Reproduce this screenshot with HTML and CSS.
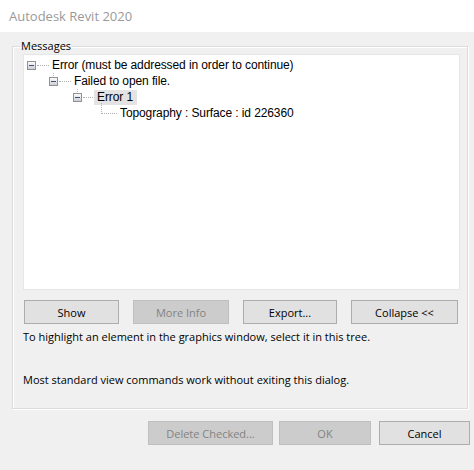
FILE: index.html
```html
<!DOCTYPE html>
<html>
<head>
<meta charset="utf-8">
<link rel="stylesheet" href="styles.css">
</head>
<body>
<div class="window">
  <div class="titlebar">Autodesk Revit 2020</div>
  <div class="dialog">
    <fieldset class="group">
      <legend class="legend">Messages</legend>
      <div class="tree">
        <div class="row lvl0">
          <span class="toggle"><svg width="9" height="9" viewBox="0 0 9 9"><defs><linearGradient id="g1" x1="0" y1="0" x2="0" y2="1"><stop offset="0" stop-color="#ffffff"/><stop offset="1" stop-color="#c9cbd0"/></linearGradient></defs><rect x="0.5" y="0.5" width="8" height="8" fill="url(#g1)" stroke="#8e9297"/><rect x="2" y="4" width="5" height="1" fill="#3f4e72"/></svg></span>
          <span class="hline"></span>
          <span class="label">Error (must be addressed in order to continue)</span>
        </div>
        <div class="row lvl1">
          <span class="vtick"></span>
          <span class="toggle"><svg width="9" height="9" viewBox="0 0 9 9"><rect x="0.5" y="0.5" width="8" height="8" fill="url(#g1)" stroke="#8e9297"/><rect x="2" y="4" width="5" height="1" fill="#3f4e72"/></svg></span>
          <span class="hline"></span>
          <span class="label">Failed to open file.</span>
        </div>
        <div class="row lvl2">
          <span class="vtick"></span>
          <span class="toggle"><svg width="9" height="9" viewBox="0 0 9 9"><rect x="0.5" y="0.5" width="8" height="8" fill="url(#g1)" stroke="#8e9297"/><rect x="2" y="4" width="5" height="1" fill="#3f4e72"/></svg></span>
          <span class="hline short"></span>
          <span class="label selected">Error 1</span>
        </div>
        <div class="row lvl3">
          <span class="elbow"></span>
          <span class="label">Topography : Surface : id 226360</span>
        </div>
      </div>
      <div class="actions">
        <button class="btn w-show">Show</button>
        <button class="btn disabled w-more">More Info</button>
        <button class="btn w-export">Export...</button>
        <button class="btn w-collapse">Collapse &lt;&lt;</button>
      </div>
      <p class="note first">To highlight an element in the graphics window, select it in this tree.</p>
      <p class="note second">Most standard view commands work without exiting this dialog.</p>
    </fieldset>
    <div class="footer">
      <button class="btn disabled w-delete">Delete Checked...</button>
      <button class="btn disabled w-ok">OK</button>
      <button class="btn w-cancel">Cancel</button>
    </div>
  </div>
</div>
</body>
</html>
```
FILE: styles.css
```css
html, body {
  margin: 0;
  padding: 0;
}
body {
  width: 474px;
  height: 470px;
  overflow: hidden;
  background: #f0f0f0;
  font-family: "Open Sans", "Noto Sans", sans-serif;
  font-size: 11px;
  color: #000;
}
.window {
  display: flex;
  flex-direction: column;
  height: 470px;
}
.titlebar {
  height: 32px;
  background: #ffffff;
  box-sizing: border-box;
  padding-left: 9px;
  font-size: 13px;
  line-height: 32px;
  color: #9a9a9a;
}
.dialog {
  flex: 1;
  background: #f0f0f0;
  display: flex;
  flex-direction: column;
}
.group {
  margin: 7px 6px 0 12px;
  padding: 0 7px 20px 10px;
  border: 1px solid #dcdcdc;
  box-shadow: inset 1px 1px 0 #ffffff, 1px 1px 0 #ffffff;
  min-width: 0;
}
.legend {
  margin-left: -3px;
  padding: 0 1px;
  font-size: 11px;
  line-height: 14px;
}
.tree {
  margin-top: 1px;
  height: 236px;
  box-sizing: border-box;
  background: #ffffff;
  border: 1px solid #e6e6e6;
  padding-top: 2px;
  font-family: "Liberation Sans", Arial, sans-serif;
  font-size: 12px;
  letter-spacing: -0.1px;
}
.row {
  height: 16px;
  display: flex;
  align-items: center;
  position: relative;
}
.lvl0 { padding-left: 3px; }
.lvl1 { padding-left: 25px; }
.lvl2 { padding-left: 49px; }
.lvl3 { padding-left: 77px; }
.toggle {
  width: 9px;
  height: 9px;
  display: block;
  flex: none;
}
.toggle svg { display: block; }
.hline {
  width: 12px;
  height: 0;
  border-top: 1px dotted #b0b0b0;
  margin: 0 3px 0 1px;
  flex: none;
}
.hline.short {
  width: 10px;
  margin-right: 1px;
}
.vtick {
  position: absolute;
  top: 0;
  width: 0;
  height: 3px;
  border-left: 1px dotted #b0b0b0;
}
.lvl1 .vtick { left: 29px; }
.lvl2 .vtick { left: 53px; }
.elbow {
  width: 16px;
  height: 11px;
  margin-top: -9px;
  margin-right: 3px;
  border-left: 1px dotted #b0b0b0;
  border-bottom: 1px dotted #b0b0b0;
  flex: none;
  box-sizing: border-box;
}
.label {
  white-space: nowrap;
  line-height: 15px;
}
.label.selected {
  background: #e3e3e3;
  padding: 0 4px 0 3px;
}
.actions {
  display: flex;
  gap: 14px;
  margin-top: 10px;
  padding-left: 1px;
}
.btn {
  height: 24px;
  box-sizing: border-box;
  background: #e1e1e1;
  border: 1px solid #adadad;
  font-family: "Open Sans", "Noto Sans", sans-serif;
  font-size: 11px;
  color: #000;
  padding: 0;
  margin: 0;
}
.btn.disabled {
  background: #cccccc;
  border-color: #bfbfbf;
  color: #838383;
}
.w-show { width: 95px; }
.w-more { width: 96px; }
.w-export { width: 94px; }
.w-collapse { width: 107px; }
.w-delete { width: 125px; }
.w-ok { width: 92px; }
.w-cancel { width: 91px; }
.note {
  margin: 0;
  line-height: 16px;
  white-space: nowrap;
}
.note.first { margin-top: 5px; }
.note.second { margin-top: 27px; }
.footer {
  display: flex;
  justify-content: flex-end;
  gap: 6px;
  margin-top: 12px;
  padding-right: 4px;
}
.footer .w-cancel { margin-left: 2px; }
```
